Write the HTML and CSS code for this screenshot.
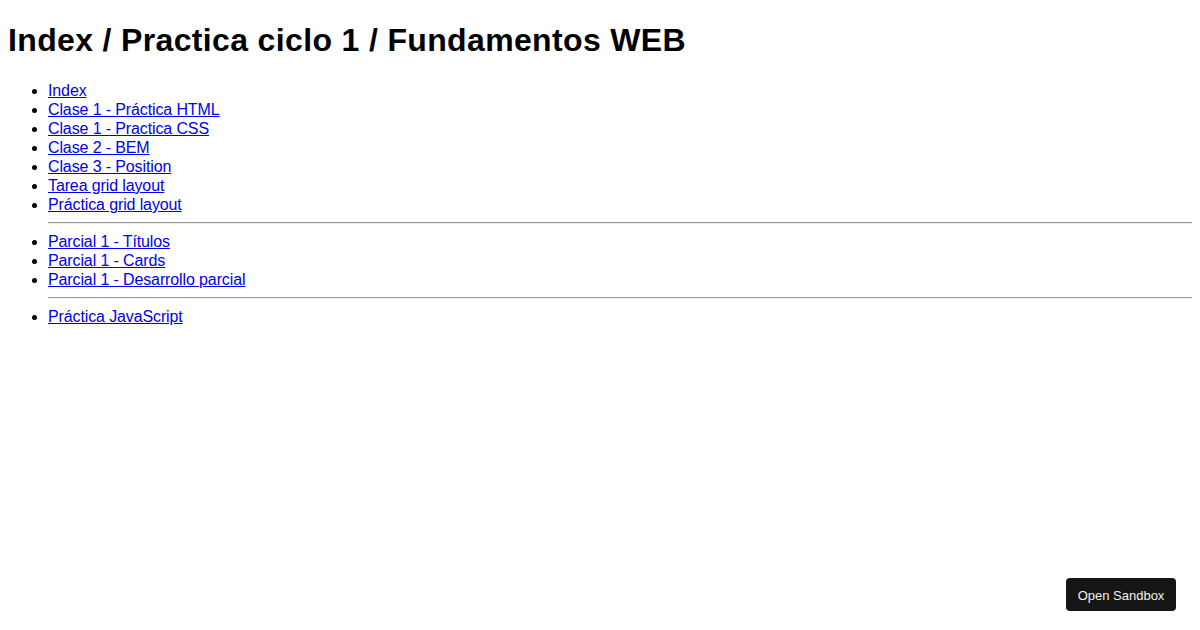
FILE: index.html
```html
<!DOCTYPE html>
<html lang="es">
<head>
<meta charset="utf-8">
<title>Index / Practica ciclo 1 / Fundamentos WEB</title>
<link rel="stylesheet" href="styles.css">
</head>
<body class="page">
<h1 class="page__title">Index / Practica ciclo 1 / Fundamentos WEB</h1>
<ul class="nav">
  <li class="nav__item"><a class="nav__link" href="#">Index</a></li>
  <li class="nav__item"><a class="nav__link" href="#">Clase 1 - Práctica HTML</a></li>
  <li class="nav__item"><a class="nav__link" href="#">Clase 1 - Practica CSS</a></li>
  <li class="nav__item"><a class="nav__link" href="#">Clase 2 - BEM</a></li>
  <li class="nav__item"><a class="nav__link" href="#">Clase 3 - Position</a></li>
  <li class="nav__item"><a class="nav__link" href="#">Tarea grid layout</a></li>
  <li class="nav__item"><a class="nav__link" href="#">Práctica grid layout</a></li>
  <hr class="nav__sep">
  <li class="nav__item"><a class="nav__link" href="#">Parcial 1 - Títulos</a></li>
  <li class="nav__item"><a class="nav__link" href="#">Parcial 1 - Cards</a></li>
  <li class="nav__item"><a class="nav__link" href="#">Parcial 1 - Desarrollo parcial</a></li>
  <hr class="nav__sep">
  <li class="nav__item"><a class="nav__link" href="#">Práctica JavaScript</a></li>
</ul>
<a class="sandbox-btn" href="#">Open Sandbox</a>
</body>
</html>
```
FILE: styles.css
```css
html {
  margin: 0;
  padding: 0;
}

.page {
  margin: 0;
  padding: 1px 8px 8px;
  font-family: "Liberation Sans", Arial, sans-serif;
  font-size: 16px;
  line-height: 19px;
  color: #000;
  background: #fff;
}

.page__title {
  font-size: 32px;
  line-height: 37px;
  font-weight: bold;
  letter-spacing: 0.35px;
  margin: 21.44px 0;
}

.nav {
  margin: 16px 0;
  padding-left: 40px;
  list-style: disc;
}

.nav__item {
  letter-spacing: -0.12px;
}

.nav__link {
  color: #0000ee;
  text-decoration: underline;
}

.nav__sep {
  margin: 8px 0;
  border: 0;
  border-top: 1px solid #9a9a9a;
  border-bottom: 1px solid #eeeeee;
  height: 0;
}

.sandbox-btn {
  position: fixed;
  right: 24px;
  bottom: 19px;
  width: 110px;
  height: 33px;
  box-sizing: border-box;
  display: flex;
  align-items: center;
  justify-content: center;
  padding-top: 2px;
  background: #151515;
  color: #f2f2f2;
  border-radius: 4px;
  font-family: "Liberation Sans", Arial, sans-serif;
  font-size: 13px;
  line-height: 1;
  letter-spacing: 0;
  text-decoration: none;
}
```
